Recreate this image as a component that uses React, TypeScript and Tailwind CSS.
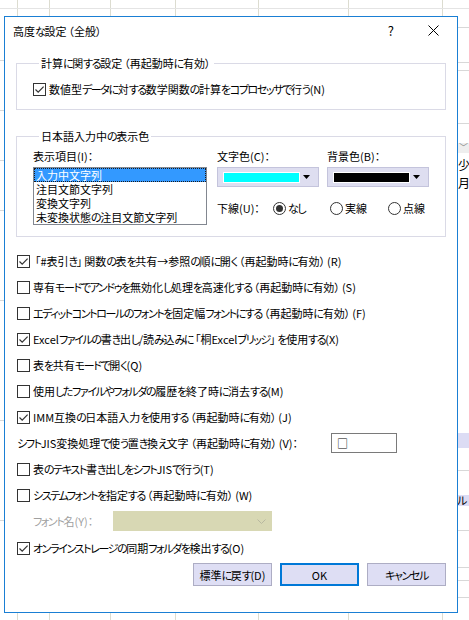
import React from "react";

// kana are set tight and brackets proportional, to get close to the narrow-kana UI font
function jp(text: string) {
  return text.split(/([（「]|[）」]|[\u3040-\u30ff]+)/).map((part, i) => {
    if (part === "（" || part === "「") {
      return (
        <span key={i} className="ml-[2px]">
          {part}
        </span>
      );
    }
    if (part === "）" || part === "」") {
      return (
        <span key={i} className="mr-[2px]">
          {part}
        </span>
      );
    }
    if (/^[\u3040-\u30ff]+$/.test(part)) {
      return (
        <span key={i} className="tracking-[-1.4px]">
          {part}
        </span>
      );
    }
    return part;
  });
}

function CheckBox({ checked }: { checked?: boolean }) {
  return (
    <span className="flex h-[13px] w-[13px] shrink-0 items-center justify-center border border-[#333] bg-white">
      {checked && (
        <svg width="11" height="11" viewBox="0 0 11 11">
          <path d="M1.5 5.5 L4.2 8.2 L9.6 2.6" fill="none" stroke="#333" strokeWidth="1.2" />
        </svg>
      )}
    </span>
  );
}

function Radio({ checked }: { checked?: boolean }) {
  return (
    <span className="flex h-[13px] w-[13px] shrink-0 items-center justify-center rounded-full border border-[#333] bg-white">
      {checked && <span className="h-[7px] w-[7px] rounded-full bg-[#333]" />}
    </span>
  );
}

function CheckRow({ checked, label }: { checked?: boolean; label: string }) {
  return (
    <div className="flex h-[26px] items-center gap-[3px]">
      <CheckBox checked={checked} />
      <span className="whitespace-nowrap">{jp(label)}</span>
    </div>
  );
}

function ColorCombo({ color }: { color: string }) {
  return (
    <div className="flex h-[20px] w-[102px] items-center border border-[#c4c4dc] bg-[#dedef0] pl-[5px] pr-[5px]">
      <div className="h-[11px] w-[77px] border border-white" style={{ backgroundColor: color }} />
      <div className="flex flex-1 justify-center">
        <svg width="7" height="4" viewBox="0 0 7 4">
          <path d="M0 0 H7 L3.5 4 Z" fill="#000" />
        </svg>
      </div>
    </div>
  );
}

function Button({ label, primary }: { label: string; primary?: boolean }) {
  return (
    <div
      className={
        primary
          ? "flex h-[23px] w-[79px] items-center justify-center border-2 border-[#0078d7] bg-[#dedef4]"
          : "flex h-[23px] w-[79px] items-center justify-center border border-[#adadc4] bg-[#dedef4]"
      }
    >
      {jp(label)}
    </div>
  );
}

const vLines = [17, 49, 110, 175, 258, 348, 442];
const rightLines = [27, 62, 70, 123, 470, 530, 567, 580, 597];

export default function App() {
  return (
    <div className="relative h-[620px] w-[469px] overflow-hidden bg-white text-[11px] leading-[14px] text-black [font-family:'Noto_Sans_CJK_JP','Noto_Sans',sans-serif] [font-feature-settings:'palt']">
      {/* spreadsheet behind the dialog */}
      {vLines.map((x) => (
        <div key={"t" + x} className="absolute top-0 h-[16px] w-px bg-[#dcdcd0]" style={{ left: x }} />
      ))}
      {vLines.map((x) => (
        <div key={"b" + x} className="absolute top-[612px] h-[8px] w-px bg-[#dcdcd0]" style={{ left: x }} />
      ))}
      <div className="absolute left-0 top-[8px] h-px w-[469px] bg-[#e4e4e4]" />
      {rightLines.map((y) => (
        <div key={"r" + y} className="absolute left-[457px] h-px w-[12px] bg-[#d8d8d8]" style={{ top: y }} />
      ))}
      <div className="absolute left-[457px] top-[143px] flex h-[10px] w-[12px] items-center bg-[#eeeeee] pl-[2px] text-[9px] text-[#888]">﹀</div>
      <div className="absolute left-[458px] top-[158px] text-[12px]">少</div>
      <div className="absolute left-[458px] top-[176px] text-[12px]">月</div>
      <div className="absolute left-[457px] top-[433px] h-[15px] w-[12px] bg-[#dcdcf4]" />
      <div className="absolute left-[457px] top-[495px] h-[11px] w-[12px] bg-[#dcdcf4] text-[11px] leading-[11px]">ル</div>
      {[60, 110, 160, 210, 300, 420, 520].map((y) => (
        <div key={"l" + y} className="absolute left-0 h-px w-[4px] bg-[#d8d8d8]" style={{ top: y }} />
      ))}

      {/* dialog */}
      <div className="absolute left-[4px] top-[16px] flex h-[597px] w-[454px] flex-col border border-[#1a7fd4] bg-white">
        <div className="flex h-[27px] items-center pl-[8px]">
          <span className="flex-1">{jp("高度な設定（全般）")}</span>
          <span className="mr-[34px] text-[13px]">?</span>
          <svg className="mr-[18px]" width="11" height="11" viewBox="0 0 11 11">
            <path d="M0.5 0.5 L10.5 10.5 M10.5 0.5 L0.5 10.5" stroke="#000" strokeWidth="1" />
          </svg>
        </div>

        <fieldset className="mx-[11px] mt-[12px] border border-[#dadae6] pb-[11px] pl-[16px]">
          <legend className="ml-[6px] px-[2px]">{jp("計算に関する設定（再起動時に有効）")}</legend>
          <div className="mt-[10px] flex h-[18px] items-center gap-[3px]">
            <CheckBox checked />
            <span>{jp("数値型データに対する数学関数の計算をコプロセッサで行う(N)")}</span>
          </div>
        </fieldset>

        <fieldset className="mx-[11px] mt-[19px] border border-[#dadae6] pb-[11px] pl-[16px]">
          <legend className="ml-[6px] px-[2px]">{jp("日本語入力中の表示色")}</legend>
          <div className="mt-[6px] flex gap-[10px]">
            <div className="flex w-[174px] flex-col">
              <span className="h-[18px]">{jp("表示項目(I)：")}</span>
              <div className="flex h-[58px] flex-col border border-[#828790]">
                <div className="flex h-[14px] items-center bg-[#3399ff] pl-[2px] leading-[12px] text-white outline outline-1 outline-dotted outline-[#1a1a1a] -outline-offset-1">入力中文字列</div>
                <div className="flex h-[14px] items-center pl-[2px] leading-[12px]">注目文節文字列</div>
                <div className="flex h-[14px] items-center pl-[2px] leading-[12px]">変換文字列</div>
                <div className="flex h-[14px] items-center pl-[2px] leading-[12px]">{jp("未変換状態の注目文節文字列")}</div>
              </div>
            </div>
            <div className="flex flex-col">
              <div className="flex gap-[8px]">
                <div className="flex flex-col">
                  <span className="h-[18px]">{jp("文字色(C)：")}</span>
                  <ColorCombo color="#00ffff" />
                </div>
                <div className="flex flex-col">
                  <span className="h-[18px]">{jp("背景色(B)：")}</span>
                  <ColorCombo color="#000000" />
                </div>
              </div>
              <div className="mt-[14px] flex items-center">
                <span className="w-[56px]">{jp("下線(U)：")}</span>
                <div className="flex w-[57px] items-center gap-[2px]">
                  <Radio checked />
                  <span>{jp("なし")}</span>
                </div>
                <div className="flex w-[58px] items-center gap-[2px]">
                  <Radio />
                  <span>実線</span>
                </div>
                <div className="flex items-center gap-[2px]">
                  <Radio />
                  <span>点線</span>
                </div>
              </div>
            </div>
          </div>
        </fieldset>

        <div className="mt-[11px] flex flex-col pl-[12px]">
          <CheckRow checked label="「#表引き」関数の表を共有→参照の順に開く（再起動時に有効）(R)" />
          <CheckRow label="専有モードでアンドゥを無効化し処理を高速化する（再起動時に有効）(S)" />
          <CheckRow label="エディットコントロールのフォントを固定幅フォントにする（再起動時に有効）(F)" />
          <CheckRow checked label="Excelファイルの書き出し/読み込みに「桐Excelブリッジ」を使用する(X)" />
          <CheckRow label="表を共有モードで開く(Q)" />
          <CheckRow label="使用したファイルやフォルダの履歴を終了時に消去する(M)" />
          <CheckRow checked label="IMM互換の日本語入力を使用する（再起動時に有効）(J)" />
          <div className="flex h-[26px] items-center">
            <span className="w-[314px] whitespace-nowrap">{jp("シフトJIS変換処理で使う置き換え文字（再起動時に有効）(V)：")}</span>
            <div className="flex h-[20px] w-[66px] items-center border border-[#7a7a7a] pl-[5px]">□</div>
          </div>
          <CheckRow label="表のテキスト書き出しをシフトJISで行う(T)" />
          <CheckRow label="システムフォントを指定する（再起動時に有効）(W)" />
          <div className="flex h-[26px] items-center pl-[16px]">
            <span className="w-[80px] text-[#a0a0a0]">{jp("フォント名(Y)：")}</span>
            <div className="flex h-[20px] w-[159px] items-center justify-end bg-[#d8d8b4] pr-[6px]">
              <svg width="9" height="5" viewBox="0 0 9 5">
                <path d="M0.5 0.5 L4.5 4.5 L8.5 0.5" fill="none" stroke="#b8b8a0" strokeWidth="1" />
              </svg>
            </div>
          </div>
          <div className="flex h-[28px] items-center gap-[3px]">
            <CheckBox checked />
            <span>{jp("オンラインストレージの同期フォルダを検出する(O)")}</span>
          </div>
        </div>

        <div className="mt-[1px] flex justify-end gap-[8px] pr-[11px]">
          <Button label="標準に戻す(D)" />
          <Button label="OK" primary />
          <Button label="キャンセル" />
        </div>
      </div>
    </div>
  );
}
